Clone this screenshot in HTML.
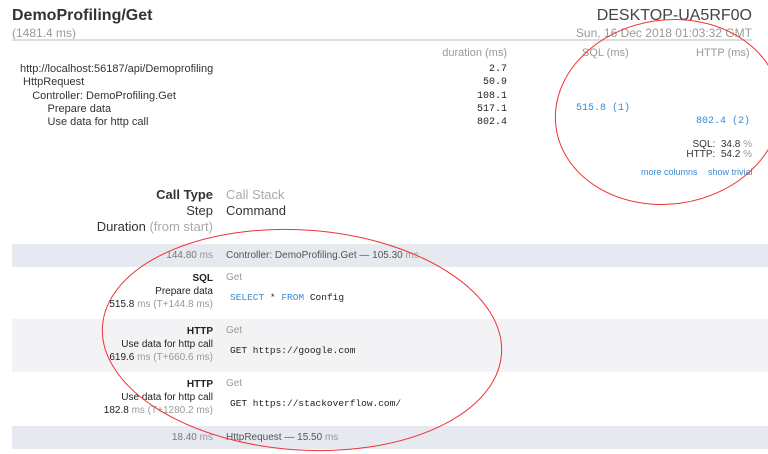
<!DOCTYPE html>
<html><head><meta charset="utf-8"><style>
body{margin:0;width:768px;height:454px;background:#fff;font-family:"Liberation Sans",sans-serif;color:#222;position:relative;overflow:hidden}
.a{position:absolute;white-space:nowrap}
.m{font-family:"Liberation Mono",monospace}
.g{color:#999}
.r{text-align:right}
.b{color:#3a8ad6}
</style></head><body>
<div class="a" style="left:12px;top:7px;font-size:16px;font-weight:bold;color:#333">DemoProfiling/Get</div>
<div class="a g" style="left:12px;top:26px;font-size:12px">(1481.4 ms)</div>
<div class="a" style="right:16px;top:7px;font-size:16px;color:#444">DESKTOP-UA5RF0O</div>
<div class="a g" style="right:16px;top:26px;font-size:12px">Sun, 16 Dec 2018 01:03:32 GMT</div>
<div class="a" style="left:12px;top:39px;width:740px;height:2px;background:#ddd"></div>

<div class="a g" style="right:261px;top:47px;font-size:11px">duration (ms)</div>
<div class="a g" style="left:582px;top:47px;font-size:11px">SQL (ms)</div>
<div class="a g" style="left:696px;top:47px;font-size:11px">HTTP (ms)</div>

<div class="a" style="left:20px;top:63px;font-size:11px;line-height:13.3px;color:#333">http://localhost:56187/api/Demoprofiling<br>&nbsp;HttpRequest<br>&nbsp;&nbsp;&nbsp;&nbsp;Controller: DemoProfiling.Get<br>&nbsp;&nbsp;&nbsp;&nbsp;&nbsp;&nbsp;&nbsp;&nbsp;&nbsp;Prepare data<br>&nbsp;&nbsp;&nbsp;&nbsp;&nbsp;&nbsp;&nbsp;&nbsp;&nbsp;Use data for http call</div>
<div class="a m r" style="right:261px;top:63px;font-size:10px;line-height:13.3px">2.7<br>50.9<br>108.1<br>517.1<br>802.4</div>
<div class="a m b" style="left:576px;top:103px;font-size:10px">515.8 (1)</div>
<div class="a m b" style="left:696px;top:116px;font-size:10px">802.4 (2)</div>
<div class="a r" style="right:16px;top:140px;font-size:10px;line-height:10px;color:#333">SQL:&nbsp; 34.8 <span class="g">%</span><br>HTTP:&nbsp; 54.2 <span class="g">%</span></div>
<div class="a b" style="left:641px;top:167px;font-size:9px">more columns</div>
<div class="a b" style="left:708px;top:167px;font-size:9px">show trivial</div>

<div class="a r" style="right:555px;top:187px;font-size:13px;line-height:16px;color:#333"><b>Call Type</b><br>Step<br>Duration <span class="g" style="color:#aaa">(from start)</span></div>
<div class="a" style="left:226px;top:187px;font-size:13px;line-height:16px;color:#333"><span style="color:#aaa">Call Stack</span><br>Command</div>

<div class="a" style="left:12px;top:244px;width:756px;height:23px;background:#e6e9ef"></div>
<div class="a r" style="right:555px;top:250px;font-size:10px;color:#777">144.80 <span class="g">ms</span></div>
<div class="a" style="left:226px;top:250px;font-size:10px;color:#555">Controller: DemoProfiling.Get — 105.30 <span class="g">ms</span></div>

<div class="a r" style="right:555px;top:272px;font-size:10px;line-height:13px"><b>SQL</b><br>Prepare data<br>515.8 <span class="g">ms (T+144.8 ms)</span></div>
<div class="a g" style="left:226px;top:272px;font-size:10px">Get</div>
<div class="a m" style="left:230px;top:292px;font-size:9.5px"><span class="b">SELECT</span> * <span class="b">FROM</span> Config</div>

<div class="a" style="left:12px;top:319px;width:756px;height:53px;background:#f3f3f5"></div>
<div class="a r" style="right:555px;top:325px;font-size:10px;line-height:13px"><b>HTTP</b><br>Use data for http call<br>619.6 <span class="g">ms (T+660.6 ms)</span></div>
<div class="a g" style="left:226px;top:325px;font-size:10px">Get</div>
<div class="a m" style="left:230px;top:345px;font-size:9.5px">GET https://google.com</div>

<div class="a r" style="right:555px;top:378px;font-size:10px;line-height:13px"><b>HTTP</b><br>Use data for http call<br>182.8 <span class="g">ms (T+1280.2 ms)</span></div>
<div class="a g" style="left:226px;top:378px;font-size:10px">Get</div>
<div class="a m" style="left:230px;top:398px;font-size:9.5px">GET https://stackoverflow.com/</div>

<div class="a" style="left:12px;top:426px;width:756px;height:23px;background:#e6e9ef"></div>
<div class="a r" style="right:555px;top:432px;font-size:10px;color:#777">18.40 <span class="g">ms</span></div>
<div class="a" style="left:226px;top:432px;font-size:10px;color:#555">HttpRequest — 15.50 <span class="g">ms</span></div>

<svg class="a" style="left:0;top:0" width="768" height="454">
<ellipse cx="668" cy="112" rx="113" ry="92" transform="rotate(-8 668 112)" fill="none" stroke="#e33" stroke-width="1"/>
<ellipse cx="302" cy="340" rx="200" ry="110" transform="rotate(4 302 340)" fill="none" stroke="#e33" stroke-width="1"/>
</svg>
</body></html>
